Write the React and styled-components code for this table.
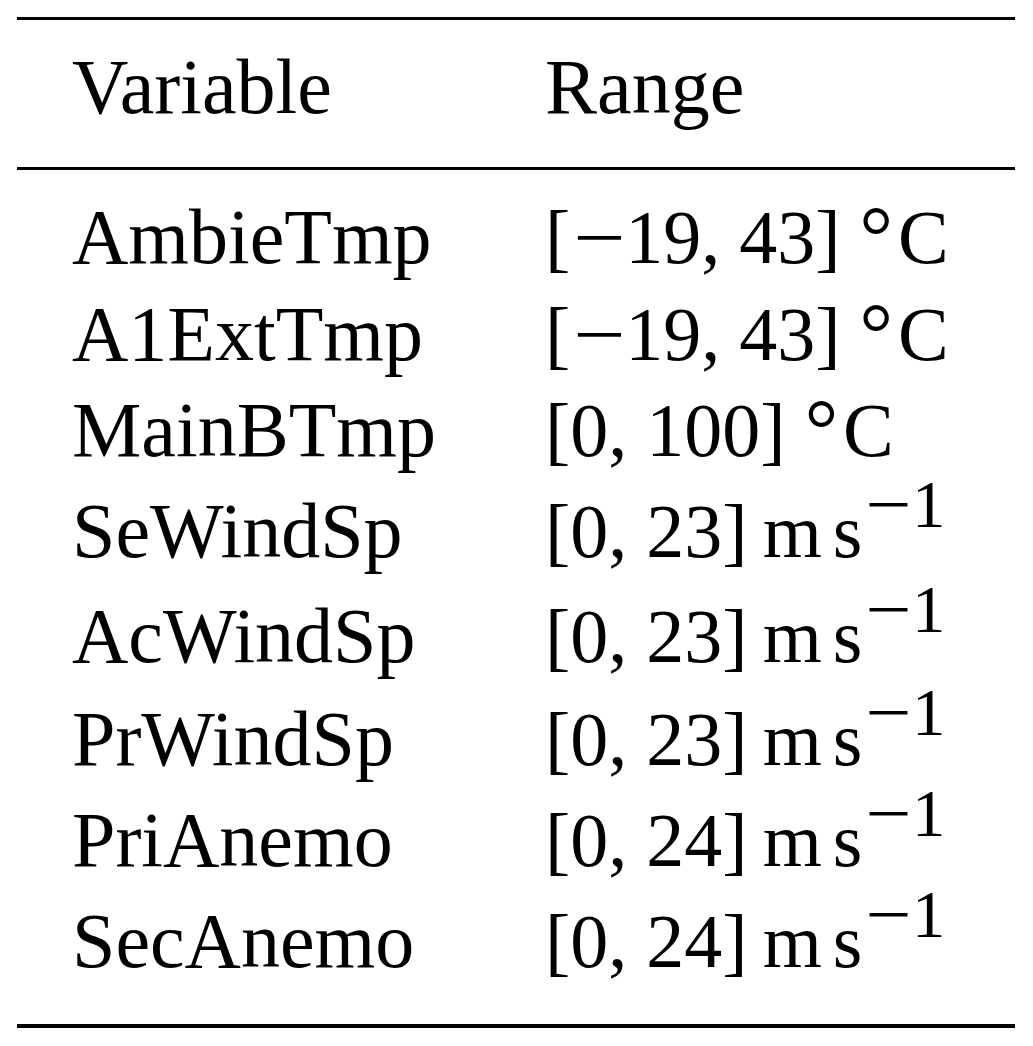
import React from "react";
import styled, { createGlobalStyle } from "styled-components";

const Global = createGlobalStyle`
  html, body { margin: 0; padding: 0; background: #ffffff; }
  body { font-family: "Liberation Serif", "Times New Roman", serif; color: #000; }
`;

const Page = styled.div`
  padding: 17px 0 0 17px;
  width: 998px;
`;

const Rule = styled.div`
  height: ${(p) => p.$thick}px;
  background: #000;
`;

const Grid = styled.div`
  display: grid;
  grid-template-columns: 473px 1fr;
  padding-left: 55px;
  padding-top: ${(p) => p.$top}px;
  padding-bottom: ${(p) => p.$bottom}px;
  line-height: 76px;
`;

const Cell = styled.div`
  height: ${(p) => p.$h}px;
  font-size: ${(p) => (p.$range ? 76 : 78)}px;
  white-space: nowrap;
`;

const Sup = styled.span`
  font-size: 0.88em;
  line-height: 0;
  vertical-align: 30px;
  margin-left: 5px;
`;

const Minus = styled.span`
  display: inline-block;
  transform: scaleX(1.22);
  margin: 0 ${(p) => p.$r}px 0 ${(p) => p.$l}px;
`;

const Deg = styled.span`
  display: inline-block;
  font-size: 1.1em;
  line-height: 0;
  vertical-align: -2px;
  margin-right: 5px;
`;

const Gap = styled.span`
  display: inline-block;
  width: ${(p) => p.$w}px;
`;

const rows = [
  { name: "AmbieTmp", lo: "19", neg: true, hi: "43", unit: "C", h: 97 },
  { name: "A1ExtTmp", lo: "19", neg: true, hi: "43", unit: "C", h: 96 },
  { name: "MainBTmp", lo: "0", hi: "100", unit: "C", h: 101 },
  { name: "SeWindSp", lo: "0", hi: "23", unit: "ms", h: 105 },
  { name: "AcWindSp", lo: "0", hi: "23", unit: "ms", h: 103 },
  { name: "PrWindSp", lo: "0", hi: "23", unit: "ms", h: 101 },
  { name: "PriAnemo", lo: "0", hi: "24", unit: "ms", h: 101 },
  { name: "SecAnemo", lo: "0", hi: "24", unit: "ms", h: 90 },
];

function Unit({ kind }) {
  if (kind === "C") {
    return (
      <>
        <Gap $w={19} />
        <Deg>°</Deg>C
      </>
    );
  }
  return (
    <>
      <Gap $w={15} />m<Gap $w={11} />s
      <Sup>
        <Minus $l={3} $r={4}>{"\u2212"}</Minus>1
      </Sup>
    </>
  );
}

function Range({ r }) {
  return (
    <>
      [{r.neg && <Minus $l={8} $r={4}>{"\u2212"}</Minus>}
      {r.lo + ", " + r.hi}]
      <Unit kind={r.unit} />
    </>
  );
}

export default function App() {
  return (
    <>
      <Global />
      <Page>
        <Rule $thick={3} />
        <Grid $top={29} $bottom={42}>
          <Cell $h={76}>Variable</Cell>
          <Cell $h={76}>Range</Cell>
        </Grid>
        <Rule $thick={3} />
        <Grid $top={29} $bottom={31}>
          {rows.map((r) => (
            <React.Fragment key={r.name}>
              <Cell $h={r.h}>{r.name}</Cell>
              <Cell $h={r.h} $range>
                <Range r={r} />
              </Cell>
            </React.Fragment>
          ))}
        </Grid>
        <Rule $thick={4} />
      </Page>
    </>
  );
}
